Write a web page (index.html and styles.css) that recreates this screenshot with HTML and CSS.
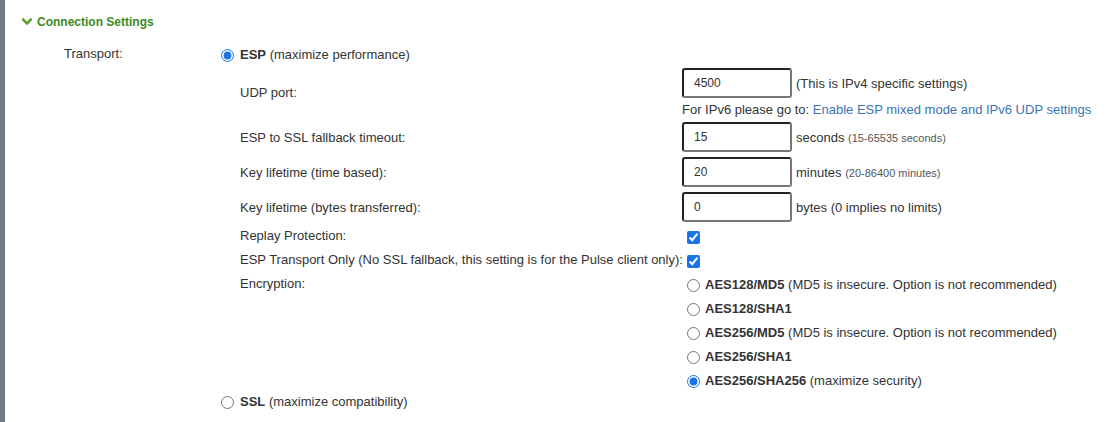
FILE: index.html
```html
<!DOCTYPE html>
<html>
<head>
<meta charset="utf-8">
<link rel="stylesheet" href="styles.css">
</head>
<body>
<div class="frame">
  <div class="section-title">
    <svg class="chev" width="10" height="8" viewBox="0 0 10 8"><path d="M1.2 1.6 L5 5.4 L8.8 1.6" fill="none" stroke="#5d9f2b" stroke-width="2.6" stroke-linecap="square"/></svg>
    <span>Connection Settings</span>
  </div>
  <div class="transport">
    <div class="t-label">Transport:</div>
    <div class="t-body">
      <label class="opt"><input type="radio" name="transport" checked><span><b>ESP</b> (maximize performance)</span></label>
      <div class="esp-grid">
        <div class="lbl">UDP port:</div>
        <div class="ctl">
          <div class="inrow"><input class="num" type="text" value="4500"><span class="after">(This is IPv4 specific settings)</span></div>
          <div class="note">For IPv6 please go to: <a class="link" href="#">Enable ESP mixed mode and IPv6 UDP settings</a></div>
        </div>

        <div class="lbl">ESP to SSL fallback timeout:</div>
        <div class="ctl">
          <div class="inrow"><input class="num" type="text" value="15"><span class="after">seconds <small>(15-65535 seconds)</small></span></div>
        </div>

        <div class="lbl">Key lifetime (time based):</div>
        <div class="ctl">
          <div class="inrow"><input class="num" type="text" value="20"><span class="after">minutes <small>(20-86400 minutes)</small></span></div>
        </div>

        <div class="lbl">Key lifetime (bytes transferred):</div>
        <div class="ctl">
          <div class="inrow"><input class="num" type="text" value="0"><span class="after">bytes (0 implies no limits)</span></div>
        </div>

        <div class="lbl chk-lbl first-chk">Replay Protection:</div>
        <div class="ctl chk first-chk"><input type="checkbox" checked></div>

        <div class="lbl chk-lbl second-chk">ESP Transport Only (No SSL fallback, this setting is for the Pulse client only):</div>
        <div class="ctl chk second-chk"><input type="checkbox" checked></div>

        <div class="lbl enc-lbl">Encryption:</div>
        <div class="ctl enc">
          <label class="eopt"><input type="radio" name="enc"><span><b>AES128/MD5</b> (MD5 is insecure. Option is not recommended)</span></label>
          <label class="eopt"><input type="radio" name="enc"><span><b>AES128/SHA1</b></span></label>
          <label class="eopt"><input type="radio" name="enc"><span><b>AES256/MD5</b> (MD5 is insecure. Option is not recommended)</span></label>
          <label class="eopt"><input type="radio" name="enc"><span><b>AES256/SHA1</b></span></label>
          <label class="eopt"><input type="radio" name="enc" checked><span><b>AES256/SHA256</b> (maximize security)</span></label>
        </div>
      </div>
      <label class="opt ssl"><input type="radio" name="transport"><span><b>SSL</b> (maximize compatibility)</span></label>
    </div>
  </div>
</div>
</body>
</html>
```

FILE: styles.css
```css
html, body {
  margin: 0;
  padding: 0;
  background: #ffffff;
}
body {
  font-family: "Liberation Sans", Arial, sans-serif;
  font-size: 13px;
  color: #333333;
}
.frame {
  border-left: 5px solid #707b87;
  height: 422px;
  box-sizing: border-box;
  padding: 14px 0 0 17px;
  overflow: hidden;
}
.section-title {
  display: flex;
  align-items: center;
  gap: 5px;
  height: 16px;
  font-weight: bold;
  color: #3d8a1f;
  font-size: 12px;
}
.chev {
  display: block;
}
.transport {
  display: grid;
  grid-template-columns: 157px auto;
  margin-top: 16px;
  margin-left: 42px;
}
.t-label {
  line-height: 16px;
  height: 16px;
}
.opt {
  display: flex;
  align-items: center;
  height: 16px;
  gap: 6px;
  white-space: nowrap;
}
.opt input, .eopt input {
  width: 13px;
  height: 13px;
  margin: 0;
  accent-color: #1a73e8;
}
.opt input {
  margin-top: 3px;
}
.opt b, .eopt b {
  font-weight: bold;
}
.ssl {
  height: 18px;
}
.esp-grid {
  display: grid;
  grid-template-columns: 442px auto;
  margin-left: 19px;
  margin-top: 6px;
}
.lbl {
  align-self: center;
  white-space: nowrap;
  padding-top: 5px;
}
.esp-grid > .lbl:first-child {
  padding-top: 0;
}
.ctl {
  padding-top: 5px;
}
.esp-grid > .lbl:first-child + .ctl {
  padding-top: 0;
}
.inrow {
  display: flex;
  align-items: center;
  gap: 4px;
  white-space: nowrap;
}
.num {
  width: 110px;
  height: 30px;
  box-sizing: border-box;
  border: 2px solid;
  border-color: #222222 #777777 #777777 #222222;
  border-radius: 3px;
  padding: 0 0 0 10px;
  margin: 0;
  font-family: "Liberation Sans", Arial, sans-serif;
  font-size: 12px;
  color: #333333;
  background: #ffffff;
  outline: none;
}
.after small {
  font-size: 11px;
  color: #555555;
}
.note {
  margin-top: 5px;
  line-height: 14px;
  white-space: nowrap;
}
.link {
  color: #3a74b4;
  text-decoration: none;
}
.chk {
  height: 18px;
  display: flex;
  align-items: center;
}
.chk input {
  width: 13px;
  height: 13px;
  margin: 2px 0 0 5px;
  accent-color: #1a73e8;
}
.chk-lbl {
  line-height: 18px;
}
.second-chk {
  padding-top: 6px;
}
.enc-lbl {
  align-self: start;
  line-height: 24px;
  padding-top: 3px;
}
.enc {
  padding-top: 3px;
  display: flex;
  flex-direction: column;
}
.eopt {
  display: flex;
  align-items: center;
  height: 24px;
  gap: 5px;
  white-space: nowrap;
}
.eopt input {
  margin: 2px 0 0 5px;
}
```
